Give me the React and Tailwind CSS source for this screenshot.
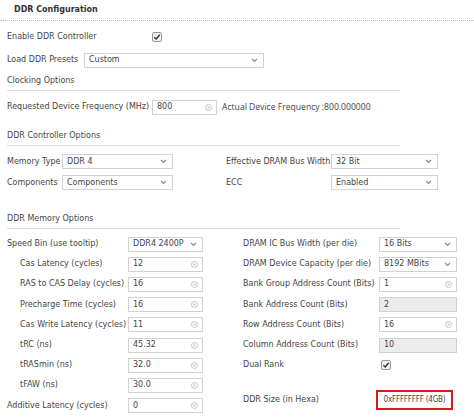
import React from 'react'

const Chevron = () => (
  <svg width="7" height="5" viewBox="0 0 7 5" className="shrink-0">
    <polyline points="1,1 3.5,3.5 6,1" fill="none" stroke="#8a8a8a" strokeWidth="1.1" />
  </svg>
)

const Clear = () => (
  <svg width="7" height="7" viewBox="0 0 7 7" className="shrink-0">
    <circle cx="3.5" cy="3.5" r="3" fill="none" stroke="#c4c4c4" strokeWidth="1" />
    <circle cx="3.5" cy="3.5" r="1.3" fill="#d4d4d4" />
  </svg>
)

const Check = () => (
  <span className="w-[10px] h-[10px] border border-[#9a9a9a] rounded-[2px] bg-[#f1f1f1] flex items-center justify-center">
    <svg width="8" height="8" viewBox="0 0 8 8">
      <polyline points="1.3,4.2 3.2,6 6.8,1.8" fill="none" stroke="#333" strokeWidth="1.4" />
    </svg>
  </span>
)

function Select({ value, w }) {
  return (
    <div className={`${w} h-[15px] border border-[#d2d2d2] bg-white flex items-center justify-between pl-[4px] pr-[5px]`}>
      <span>{value}</span>
      <Chevron />
    </div>
  )
}

function Input({ value, w, disabled }) {
  return (
    <div className={`${w} h-[15px] border border-[#d2d2d2] flex items-center justify-between pl-[4px] pr-[4px] ${disabled ? 'bg-[#ececec]' : 'bg-white'}`}>
      <span>{value}</span>
      {!disabled && <Clear />}
    </div>
  )
}

function Heading({ children }) {
  return (
    <div className="h-[20px] w-[393px] flex items-center border-b border-[#dcdcdc]">{children}</div>
  )
}

const left = [
  { label: 'Speed Bin (use tooltip)', value: 'DDR4 2400P', type: 'select' },
  { label: 'Cas Latency (cycles)', value: '12', indent: true },
  { label: 'RAS to CAS Delay (cycles)', value: '16', indent: true },
  { label: 'Precharge Time (cycles)', value: '16', indent: true },
  { label: 'Cas Write Latency (cycles)', value: '11', indent: true },
  { label: 'tRC (ns)', value: '45.32', indent: true },
  { label: 'tRASmin (ns)', value: '32.0', indent: true },
  { label: 'tFAW (ns)', value: '30.0', indent: true },
  { label: 'Additive Latency (cycles)', value: '0' },
]

const right = [
  { label: 'DRAM IC Bus Width (per die)', value: '16 Bits', type: 'select' },
  { label: 'DRAM Device Capacity (per die)', value: '8192 MBits', type: 'select' },
  { label: 'Bank Group Address Count (Bits)', value: '1' },
  { label: 'Bank Address Count (Bits)', value: '2', disabled: true },
  { label: 'Row Address Count (Bits)', value: '16' },
  { label: 'Column Address Count (Bits)', value: '10', disabled: true },
  { label: 'Dual Rank', type: 'check' },
]

export default function App() {
  return (
    <div className="w-[474px] h-[420px] bg-white text-[8px] text-[#454545] font-['DejaVu_Sans',sans-serif] overflow-hidden">
      <div className="h-[21px] pl-[14px] flex items-center font-bold text-[8px] text-[#333] border-b border-dotted border-[#b8b8b8]">
        DDR Configuration
      </div>

      <div className="pl-[7px]">
        <div className="mt-[6px] h-[20px] flex items-center">
          <span className="w-[145px]">Enable DDR Controller</span>
          <Check />
        </div>

        <div className="mt-[3px] h-[20px] flex items-center">
          <span className="w-[77px]">Load DDR Presets</span>
          <Select value="Custom" w="w-[180px]" />
        </div>

        <div className="mt-[1px]">
          <Heading>Clocking Options</Heading>
        </div>

        <div className="mt-[6px] h-[20px] flex items-center">
          <span className="w-[145px]">Requested Device Frequency (MHz)</span>
          <Input value="800" w="w-[65px]" />
          <span className="ml-[5px] font-['Open_Sans',sans-serif] text-[8.6px]">Actual Device Frequency :800.000000</span>
        </div>

        <div className="mt-[9px]">
          <Heading>DDR Controller Options</Heading>
        </div>

        <div className="mt-[5px] flex flex-col">
          {[
            ['Memory Type', 'DDR 4', 'Effective DRAM Bus Width', '32 Bit'],
            ['Components', 'Components', 'ECC', 'Enabled'],
          ].map(([l1, v1, l2, v2]) => (
            <div key={l1} className="h-[21px] flex items-center">
              <span className="w-[55px]">{l1}</span>
              <Select value={v1} w="w-[111px]" />
              <span className="ml-[53px] w-[105px]">{l2}</span>
              <Select value={v2} w="w-[107px]" />
            </div>
          ))}
        </div>

        <div className="mt-[16px]">
          <Heading>DDR Memory Options</Heading>
        </div>

        <div className="mt-[5px] flex">
          <div className="w-[236px] flex flex-col">
            {left.map((r) => (
              <div key={r.label} className="h-[20.2px] flex items-center">
                <span className={`w-[121px] ${r.indent ? 'pl-[13px]' : ''}`}>{r.label}</span>
                {r.type === 'select' ? <Select value={r.value} w="w-[75px]" /> : <Input value={r.value} w="w-[75px]" />}
              </div>
            ))}
          </div>
          <div className="flex flex-col">
            {right.map((r) => (
              <div key={r.label} className="h-[20.2px] flex items-center">
                <span className="w-[136px]">{r.label}</span>
                {r.type === 'select' && <Select value={r.value} w="w-[78px]" />}
                {r.type === 'check' && <span className="ml-[2px]"><Check /></span>}
                {!r.type && <Input value={r.value} w="w-[78px]" disabled={r.disabled} />}
              </div>
            ))}
            <div className="mt-[14.6px] h-[20px] flex items-center">
              <span className="w-[133px]">DDR Size (in Hexa)</span>
              <div className="h-[20px] w-[77px] border-2 border-[#e0141e] flex items-center justify-center whitespace-nowrap font-['DejaVu_Sans_Condensed','DejaVu_Sans',sans-serif] text-[8px] tracking-[-0.2px]">0xFFFFFFFF (4GB)</div>
            </div>
          </div>
        </div>
      </div>
    </div>
  )
}
